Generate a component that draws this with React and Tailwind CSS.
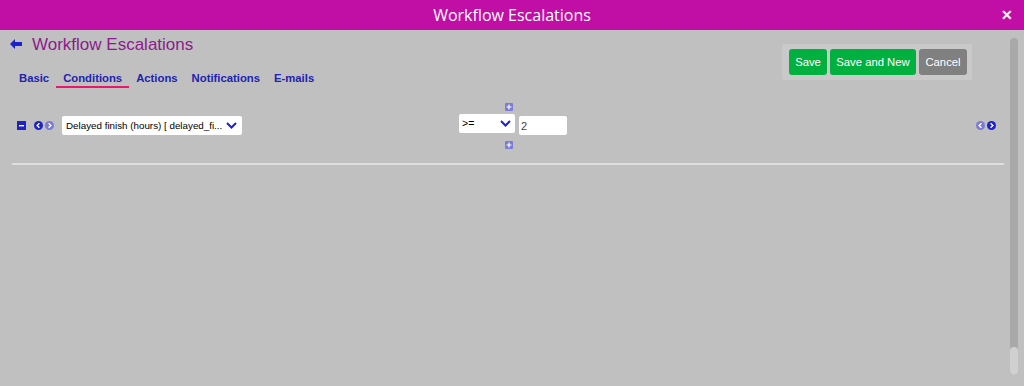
import React from "react";

function CircleArrow({ dir, light }) {
  return (
    <svg width="9" height="9" viewBox="0 0 10 10" className="block">
      <circle cx="5" cy="5" r="5" fill={light ? "#7b7bd6" : "#1d23c8"} />
      {dir === "left" ? (
        <path d="M6 2.5 L3.5 5 L6 7.5" stroke="#fff" strokeWidth="1.6" fill="none" />
      ) : (
        <path d="M4 2.5 L6.5 5 L4 7.5" stroke="#fff" strokeWidth="1.6" fill="none" />
      )}
    </svg>
  );
}

function PlusBox() {
  return (
    <svg width="8" height="8" viewBox="0 0 8 8" className="block">
      <rect width="8" height="8" rx="1" fill="#7c7cd4" />
      <path d="M4 1.5 V6.5 M1.5 4 H6.5" stroke="#fff" strokeWidth="1.2" />
    </svg>
  );
}

function Chevron() {
  return (
    <svg width="11" height="7" viewBox="0 0 11 7" className="block shrink-0">
      <path d="M1 1 L5.5 5.5 L10 1" stroke="#1d23c8" strokeWidth="2" fill="none" />
    </svg>
  );
}

export default function App() {
  const tabs = ["Basic", "Conditions", "Actions", "Notifications", "E-mails"];
  return (
    <div className="w-[1024px] h-[386px] bg-[#c0c0c0] overflow-hidden" style={{ fontFamily: "'Liberation Sans', Arial, sans-serif" }}>
      <div className="h-[30px] bg-[#c10ea5] flex items-center justify-center relative">
        <span className="text-white text-[16px]" style={{ fontFamily: "'Open Sans', 'Liberation Sans', sans-serif" }}>Workflow Escalations</span>
        <span className="absolute right-[11px] top-[5px] text-white font-bold text-[14px]">✕</span>
      </div>

      <div className="flex h-[356px]">
        <div className="flex-1 pl-[10px] pr-[6px]">
          <div className="flex items-start justify-between">
            <div>
              <div className="flex items-center gap-[10px] mt-[5px] h-[18px]">
                <svg width="12" height="10" viewBox="0 0 12 10" className="block">
                  <path d="M0 5 L5 0 V3 H12 V7 H5 V10 Z" fill="#1d23c8" />
                </svg>
                <span className="text-[17px] text-[#8e1a8e] leading-none">Workflow Escalations</span>
              </div>
              <div className="flex gap-[14px] mt-[17px] pl-[9px] text-[11.3px] font-bold text-[#1d23b0]">
                {tabs.map((t) => (
                  <div key={t} className="relative">
                    <span>{t}</span>
                    {t === "Conditions" && (
                      <div className="absolute left-[-7px] right-[-7px] top-[16px] h-[2px] bg-[#e8186d]" />
                    )}
                  </div>
                ))}
              </div>
            </div>
            <div className="mt-[14px] mr-[32px] bg-[#c9c9c9] rounded-[2px] pl-[7px] pr-[5px] py-[5px] flex gap-[3px] text-[11.3px] text-white">
              <div className="h-[26px] w-[38px] flex items-center justify-center bg-[#00b140] rounded-[3px]">Save</div>
              <div className="h-[26px] w-[86px] flex items-center justify-center bg-[#00b140] rounded-[3px]">Save and New</div>
              <div className="h-[26px] w-[48px] flex items-center justify-center bg-[#808080] rounded-[3px]">Cancel</div>
            </div>
          </div>

          <div className="flex items-center mt-[19px] pl-[7px] h-[40px]">
            <svg width="9" height="9" viewBox="0 0 9 9" className="block mr-[8px]">
              <rect width="9" height="9" fill="#1d23c8" />
              <rect x="2" y="4" width="5" height="1.4" fill="#fff" />
            </svg>
            <div className="flex gap-[2px] mr-[8px]">
              <CircleArrow dir="left" />
              <CircleArrow dir="right" light />
            </div>
            <div className="w-[180px] h-[19px] bg-white rounded-[2px] flex items-center justify-between pl-[4px] pr-[5px] text-[9.8px] text-black whitespace-nowrap overflow-hidden">
              <span>Delayed finish (hours) [ delayed_fi...</span>
              <Chevron />
            </div>
            <div className="ml-[217px] flex flex-col items-end">
              <div className="mr-[2px] mb-[3px]"><PlusBox /></div>
              <div className="w-[56px] h-[19px] bg-white rounded-[2px] flex items-center justify-between pl-[3px] pr-[4px] text-[10.5px] text-black">
                <span>&gt;=</span>
                <Chevron />
              </div>
              <div className="mr-[2px] mt-[8px]"><PlusBox /></div>
            </div>
            <div className="ml-[4px] w-[48px] h-[19px] bg-white rounded-[2px] flex items-center pl-[2px] text-[11px] text-[#444]">2</div>
            <div className="ml-auto flex gap-[2px] mr-[8px]">
              <CircleArrow dir="left" light />
              <CircleArrow dir="right" />
            </div>
          </div>

          <div className="mt-[17px] ml-[2px] mr-[0px] h-[2px] bg-[#dedede]" />
        </div>

        <div className="w-[14px] pt-[8px] pr-[6px]">
          <div className="w-[8px] h-[337px] rounded-full bg-[#a9a9a9] flex flex-col justify-end overflow-hidden">
            <div className="h-[28px] rounded-full bg-[#d0d0d0]" />
          </div>
        </div>
      </div>
    </div>
  );
}
